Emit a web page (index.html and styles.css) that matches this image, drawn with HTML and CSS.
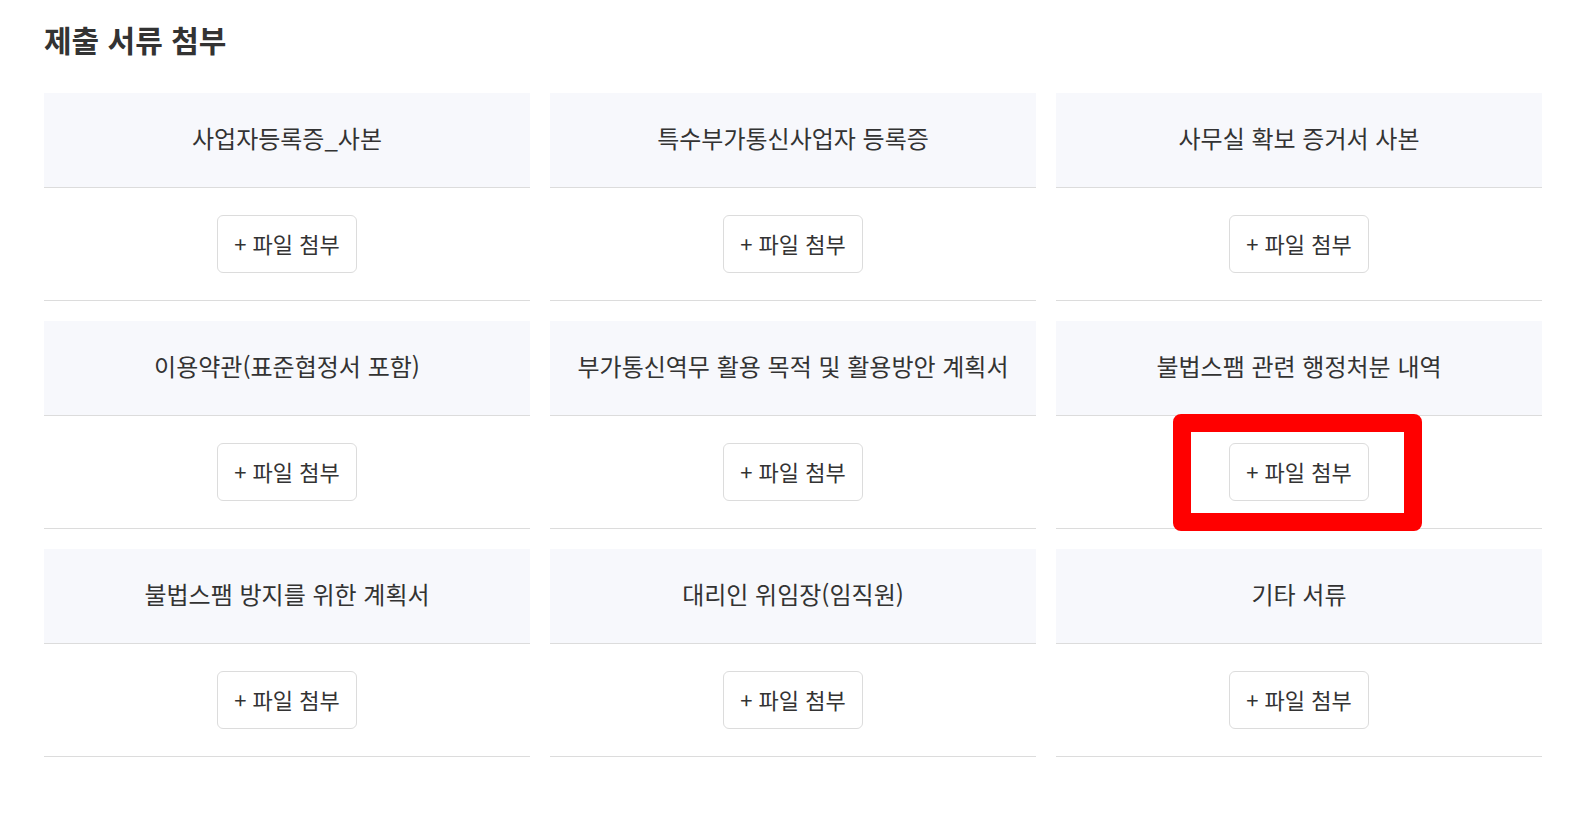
FILE: index.html
```html
<!DOCTYPE html>
<html lang="ko">
<head>
<meta charset="utf-8">
<title>제출 서류 첨부</title>
<link rel="stylesheet" href="styles.css">
</head>
<body>
<div class="page">
  <h1 class="title">제출 서류 첨부</h1>
  <div class="grid">
    <div class="cell"><div class="cell-head">사업자등록증_사본</div><div class="cell-body"><button class="attach">+ 파일 첨부</button></div></div>
    <div class="cell"><div class="cell-head">특수부가통신사업자 등록증</div><div class="cell-body"><button class="attach">+ 파일 첨부</button></div></div>
    <div class="cell"><div class="cell-head">사무실 확보 증거서 사본</div><div class="cell-body"><button class="attach">+ 파일 첨부</button></div></div>
    <div class="cell"><div class="cell-head">이용약관(표준협정서 포함)</div><div class="cell-body"><button class="attach">+ 파일 첨부</button></div></div>
    <div class="cell"><div class="cell-head">부가통신역무 활용 목적 및 활용방안 계획서</div><div class="cell-body"><button class="attach">+ 파일 첨부</button></div></div>
    <div class="cell"><div class="cell-head">불법스팸 관련 행정처분 내역</div><div class="cell-body"><button class="attach">+ 파일 첨부</button><span class="highlight"></span></div></div>
    <div class="cell"><div class="cell-head">불법스팸 방지를 위한 계획서</div><div class="cell-body"><button class="attach">+ 파일 첨부</button></div></div>
    <div class="cell"><div class="cell-head">대리인 위임장(임직원)</div><div class="cell-body"><button class="attach">+ 파일 첨부</button></div></div>
    <div class="cell"><div class="cell-head">기타 서류</div><div class="cell-body"><button class="attach">+ 파일 첨부</button></div></div>
  </div>
</div>
</body>
</html>
```

FILE: styles.css
```css
* { box-sizing: border-box; }
html, body { margin: 0; padding: 0; background: #fff; }
body {
  font-family: "Noto Sans CJK KR", "Noto Sans", sans-serif;
  color: #333;
}
.page {
  padding: 0 0 40px 44px;
}
.title {
  margin: 19px 0 34px;
  height: 40px;
  line-height: 40px;
  font-size: 30px;
  font-weight: 700;
  color: #333;
}
.grid {
  width: 1498px;
  display: grid;
  grid-template-columns: repeat(3, 486px);
  column-gap: 20px;
  row-gap: 20px;
}
.cell {
  display: flex;
  flex-direction: column;
}
.cell-head {
  height: 95px;
  padding-bottom: 5px;
  background: #f7f8fc;
  border-bottom: 1px solid #dcdcdc;
  display: flex;
  align-items: center;
  justify-content: center;
  font-size: 24px;
  color: #333;
}
.cell-body {
  position: relative;
  height: 113px;
  border-bottom: 1px solid #dcdcdc;
  display: flex;
  align-items: center;
  justify-content: center;
}
.attach {
  height: 58px;
  padding: 0 16px 2px;
  background: #fff;
  border: 1px solid #dcdcdc;
  border-radius: 6px;
  font-family: "Noto Sans CJK KR", "Noto Sans", sans-serif;
  font-size: 22px;
  color: #333;
  cursor: pointer;
}
.highlight {
  position: absolute;
  left: 117px;
  top: -2px;
  width: 249px;
  height: 117px;
  border: 18px solid #ff0000;
  border-radius: 8px;
  pointer-events: none;
}
```
